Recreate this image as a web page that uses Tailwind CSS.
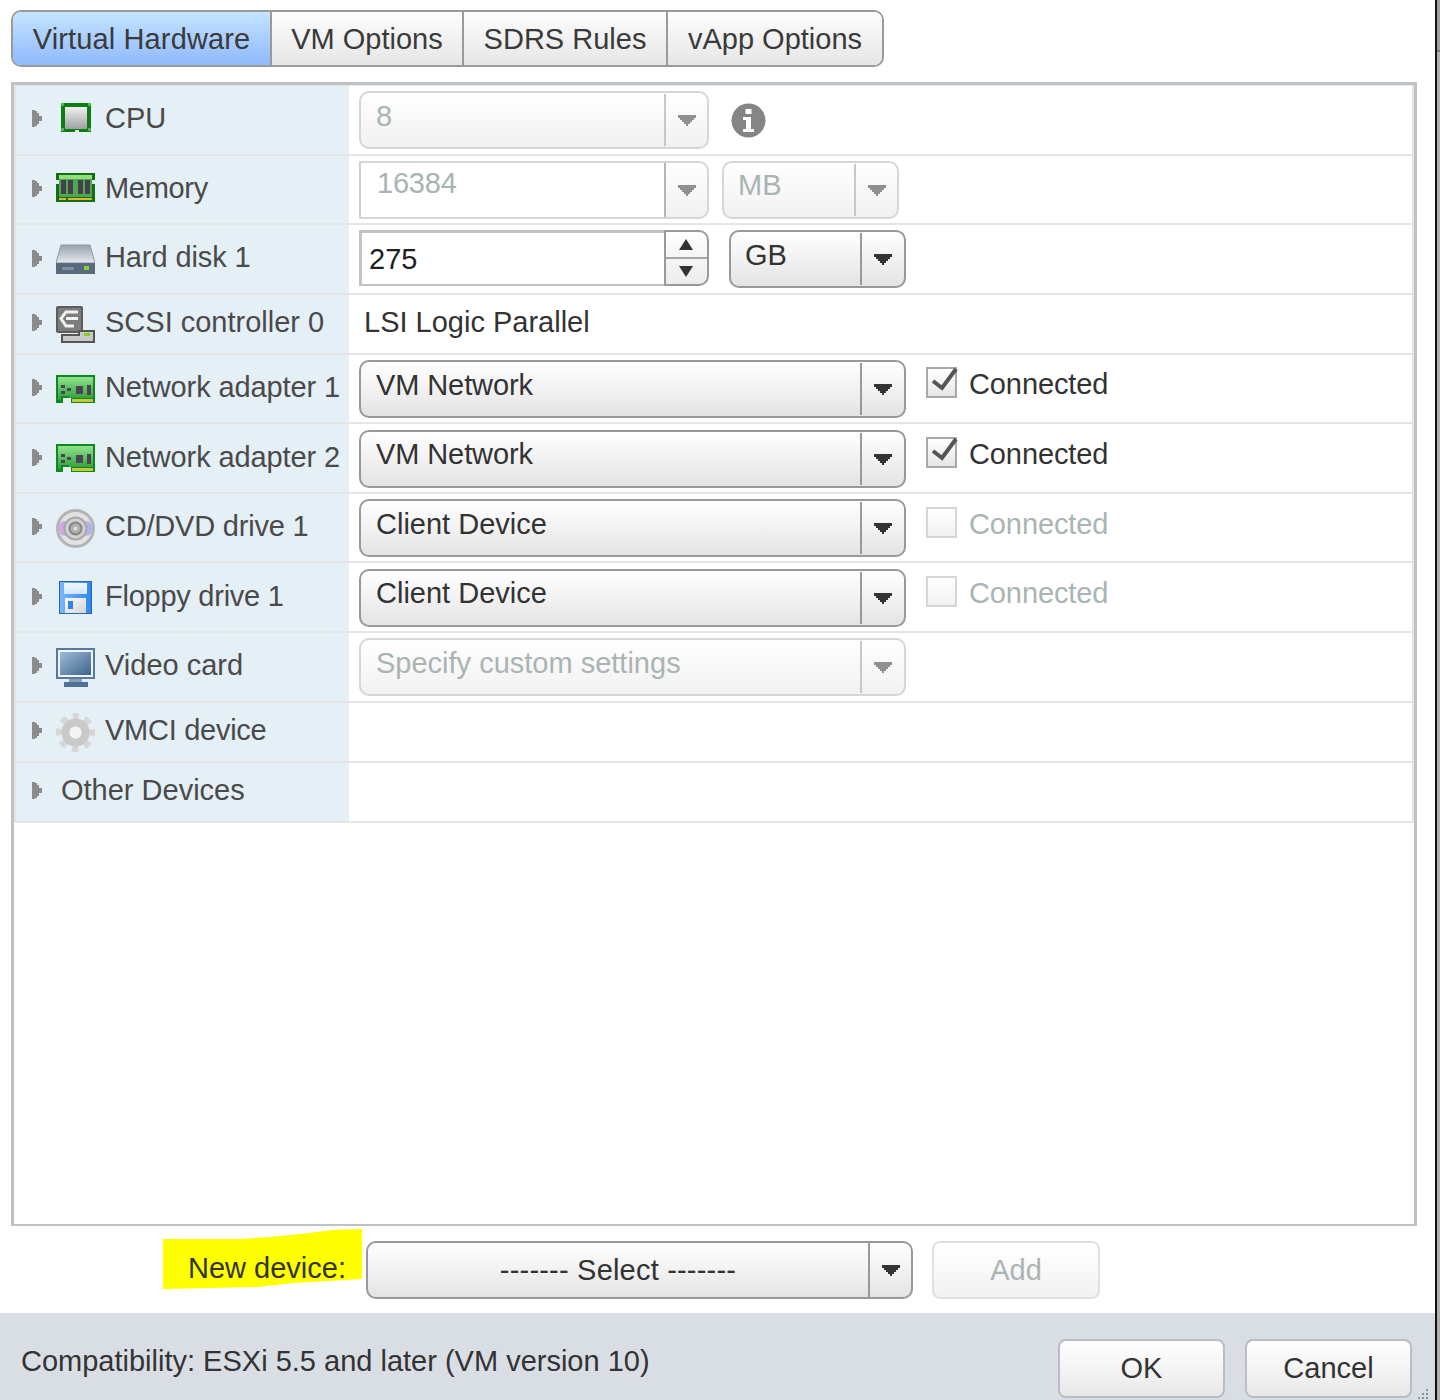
<!DOCTYPE html>
<html lang="en">
<head>
  <meta charset="UTF-8">
  <title>Virtual Hardware</title>
  <script src="https://cdn.jsdelivr.net/npm/@tailwindcss/browser@4"></script>
</head>
<body class="bg-white font-['Liberation_Sans',Arial,sans-serif] text-[29px] leading-none text-[#333]">
  <svg class="absolute h-0 w-0" width="0" height="0">
    <defs>
      <symbol id="expand" viewBox="0 0 10 17"><path d="M0 0h3v1h2v2h2v3h3v5H7v3H5v2H3v1H0z" fill="#8b8b8b"/></symbol>
      <symbol id="caret" viewBox="0 0 18 11"><path d="M0 0h18v3h-2v2h-2v2h-2v2h-2v2H8V9H6V7H4V5H2V3H0z" fill="currentColor"/></symbol>
      <linearGradient id="netGreen" x1="0" y1="0" x2="0" y2="1"><stop offset="0" stop-color="#8fe48c"/><stop offset="1" stop-color="#2f9a3c"/></linearGradient>
      <symbol id="nic" viewBox="0 0 39 28">
        <path d="M0 0h39v28H15v-5H7v5H0z" fill="#0d8a1e"/>
        <path d="M2 2h35v21H13v-2H5v4H2z" fill="url(#netGreen)"/>
        <path d="M16 24h21v3H16z" fill="#c6c838"/>
        <path d="M5 10h4v3H5zM5 16h4v3H5zM11 13h4v3h-4zM20 11h7v8h-7zM31 10h4v10h-4z" fill="#4a4650"/>
      </symbol>
    </defs>
  </svg>

  <div class="flex h-[1400px] w-[1440px]">
    <div class="relative flex w-[1435px] flex-col">

      <!-- Tabs -->
      <div class="pl-[11px] pt-[10px]">
        <div class="flex h-[57px] w-[873px] overflow-hidden rounded-[10px] border-2 border-[#9a9a9a] text-[#3a3a3a]">
          <div class="flex w-[259px] items-center justify-center border-r-2 border-[#9a9a9a] bg-gradient-to-b from-[#c4e4ff] to-[#90b9fb] pt-[2px] tracking-[0.13px]">Virtual Hardware</div>
          <div class="flex w-[192px] items-center justify-center border-r-2 border-[#9a9a9a] bg-gradient-to-b from-[#fdfdfd] to-[#e6e6e6] pt-[2px]">VM Options</div>
          <div class="flex w-[204px] items-center justify-center border-r-2 border-[#9a9a9a] bg-gradient-to-b from-[#fdfdfd] to-[#e6e6e6] pt-[2px]">SDRS Rules</div>
          <div class="flex flex-1 items-center justify-center bg-gradient-to-b from-[#fdfdfd] to-[#e6e6e6] pt-[2px]">vApp Options</div>
        </div>
      </div>

      <!-- Device list -->
      <div class="ml-[11px] mt-[15px] h-[1144px] w-[1406px] border-[3px] border-b-2 border-[#bcc2c6]">
        <div class="border-x-2 border-t border-[#e5e5e5]">

          <!-- CPU -->
          <div class="flex h-[70px] border-b-2 border-[#e5e5e5]">
            <div class="flex w-[333px] items-center bg-[#e4eff6] pb-[3px] pl-[16px] text-[#4a4a4a]">
              <svg class="mr-[14px] h-[17px] w-[10px]"><use href="#expand"/></svg>
              <div class="mr-[10px] flex w-[39px] justify-center pb-[2px]">
                <svg width="30" height="30" viewBox="0 0 30 30">
                  <defs><linearGradient id="cpuFace" x1="0" y1="0" x2="0" y2="1"><stop offset="0" stop-color="#f0f0f0"/><stop offset="1" stop-color="#a0a0a0"/></linearGradient></defs>
                  <path d="M0 0h30v29H18v-2h-4v2H0z" fill="#0b7d12"/>
                  <path d="M0 0h3v3H0zM27 0h3v3h-3zM0 25h3v3H0zM27 25h3v3h-3z" fill="#52b54f"/>
                  <rect x="4" y="4" width="22" height="22" fill="url(#cpuFace)"/>
                </svg>
              </div>
              <span>CPU</span>
            </div>
            <div class="flex flex-1 items-start pl-[10px] pt-[5px]">
              <div class="flex h-[58px] w-[350px] rounded-[10px] border-2 border-[#d6d6d6] bg-gradient-to-b from-white to-[#f1f1f1] text-[#a9b4b4]">
                <div class="flex flex-1 items-center pb-[8px] pl-[15px]">8</div>
                <div class="my-[1px] flex w-[43px] items-center justify-center border-l-2 border-[#c8c8c8] text-[#8f8f8f]"><svg class="h-[11px] w-[18px]"><use href="#caret"/></svg></div>
              </div>
              <svg class="ml-[22px] mt-[12px]" width="35" height="35" viewBox="0 0 35 35">
                <circle cx="17.5" cy="17.5" r="17" fill="#858585"/>
                <rect x="14.5" y="6" width="6" height="5" fill="#fff"/>
                <path d="M12 14h8v12h3v3H12v-3h3v-9h-3z" fill="#fff"/>
              </svg>
            </div>
          </div>

          <!-- Memory -->
          <div class="flex h-[69px] border-b-2 border-[#e5e5e5]">
            <div class="flex w-[333px] items-center bg-[#e4eff6] pb-[3px] pl-[16px] text-[#4a4a4a]">
              <svg class="mr-[14px] h-[17px] w-[10px]"><use href="#expand"/></svg>
              <div class="mr-[10px] flex w-[39px] justify-center pb-[2px]">
                <svg width="39" height="29" viewBox="0 0 39 29">
                  <rect width="39" height="29" fill="#136f16"/>
                  <rect x="3" y="2" width="33" height="4" fill="#92e07c"/>
                  <rect x="3" y="6" width="33" height="18" fill="#4ea852"/>
                  <path d="M0 7h3v4H0zM36 7h3v4h-3z" fill="#dfeaf0"/>
                  <path d="M5 7h5v14H5zM12 7h5v14h-5zM22 7h5v14h-5zM29 7h5v14h-5z" fill="#45414a"/>
                  <path d="M3 25h7v2H3zM12 25h24v2H12z" fill="#e6b52e"/>
                </svg>
              </div>
              <span class="tracking-[-0.3px]">Memory</span>
            </div>
            <div class="flex flex-1 items-start pl-[10px] pt-[5px]">
              <div class="flex h-[58px] w-[350px] overflow-hidden rounded-r-[10px] border-2 border-l-0 border-[#d6d6d6] bg-gradient-to-b from-white to-[#f1f1f1]">
                <div class="flex w-[307px] items-center border-2 border-y-0 border-l-[#d0d0d0] border-r-[#b5b5b5] bg-white pb-[14px] pl-[16px] text-[#a9b4b4] tracking-[-0.2px]">16384</div>
                <div class="flex flex-1 items-center justify-center text-[#8f8f8f]"><svg class="h-[11px] w-[18px]"><use href="#caret"/></svg></div>
              </div>
              <div class="ml-[13px] flex h-[58px] w-[177px] rounded-[10px] border-2 border-[#d6d6d6] bg-gradient-to-b from-white to-[#f1f1f1] text-[#a9b4b4]">
                <div class="flex flex-1 items-center pb-[10px] pl-[14px]">MB</div>
                <div class="my-[1px] flex w-[43px] items-center justify-center border-l-2 border-[#c8c8c8] text-[#8f8f8f]"><svg class="h-[11px] w-[18px]"><use href="#caret"/></svg></div>
              </div>
            </div>
          </div>

          <!-- Hard disk -->
          <div class="flex h-[70px] border-b-2 border-[#e5e5e5]">
            <div class="flex w-[333px] items-center bg-[#e4eff6] pb-[4px] pl-[16px] text-[#4a4a4a]">
              <svg class="mr-[14px] mt-[2px] h-[17px] w-[10px]"><use href="#expand"/></svg>
              <div class="mr-[10px] flex w-[39px] justify-center pt-[3px]">
                <svg width="39" height="30" viewBox="0 0 39 30">
                  <defs><linearGradient id="diskTop" x1="0" y1="0" x2="0" y2="1"><stop offset="0" stop-color="#98a2ae"/><stop offset="1" stop-color="#e6e9ed"/></linearGradient></defs>
                  <path d="M5 1h29l5 18H0z" fill="url(#diskTop)" stroke="#8d97a3"/>
                  <rect y="19" width="39" height="11" fill="#596a7d"/>
                  <rect x="6" y="23" width="12" height="3" fill="#7f8d9c"/>
                  <rect x="28" y="22" width="5" height="4" fill="#86d13a"/>
                </svg>
              </div>
              <span class="tracking-[-0.1px]">Hard disk 1</span>
            </div>
            <div class="flex flex-1 items-start pl-[10px] pt-[5px]">
              <div class="flex h-[56px] w-[305px] items-center border-[3px] border-b-2 border-r-0 border-[#bfc4c6] bg-white pl-[7px] pt-[2px] text-[#1f1f1f]">275</div>
              <div class="flex h-[56px] w-[45px] flex-col rounded-r-[10px] border-2 border-[#9a9a9a] bg-gradient-to-b from-white to-[#ececec] text-[#333]">
                <div class="flex flex-1 items-center justify-center border-b-2 border-[#a5a5a5] pr-[2px]"><svg width="14" height="11" viewBox="0 0 14 11"><path d="M7 0l7 11H0z" fill="currentColor"/></svg></div>
                <div class="flex flex-1 items-center justify-center pr-[2px]"><svg width="14" height="11" viewBox="0 0 14 11"><path d="M0 0h14L7 11z" fill="currentColor"/></svg></div>
              </div>
              <div class="ml-[20px] flex h-[58px] w-[177px] rounded-[10px] border-2 border-[#999] bg-gradient-to-b from-white to-[#e4e4e4]">
                <div class="flex flex-1 items-center pb-[8px] pl-[14px]">GB</div>
                <div class="my-[1px] flex w-[44px] items-center justify-center border-l-2 border-[#999]"><svg class="h-[11px] w-[18px]"><use href="#caret"/></svg></div>
              </div>
            </div>
          </div>

          <!-- SCSI -->
          <div class="flex h-[60px] border-b-2 border-[#e5e5e5]">
            <div class="flex w-[333px] items-center bg-[#e4eff6] pb-[4px] pl-[16px] text-[#4a4a4a]">
              <svg class="mr-[14px] h-[17px] w-[10px]"><use href="#expand"/></svg>
              <div class="mr-[10px] flex w-[39px] justify-center pt-[5px]">
                <svg width="39" height="37" viewBox="0 0 39 37">
                  <rect width="27" height="27" rx="2" fill="#5c5c5c"/>
                  <rect x="2" y="2" width="23" height="23" fill="#7d7d7d"/>
                  <path d="M22 6H10L5 12.5 10 20H18M22 12.5H10" fill="none" stroke="#f1f1f1" stroke-width="3"/>
                  <path d="M22 24h17v13H5V28h17z" fill="#555"/>
                  <path d="M24 26h13v9H7v-5h17z" fill="#c9c9c9"/>
                  <rect x="28" y="27" width="6" height="3" fill="#7ed321"/>
                </svg>
              </div>
              <span>SCSI controller 0</span>
            </div>
            <div class="flex flex-1 items-center pb-[3px] pl-[15px]">LSI Logic Parallel</div>
          </div>

          <!-- Network adapter 1 -->
          <div class="flex h-[69px] border-b-2 border-[#e5e5e5]">
            <div class="flex w-[333px] items-center bg-[#e4eff6] pl-[16px] text-[#4a4a4a]">
              <svg class="mb-[2px] mr-[14px] h-[17px] w-[10px]"><use href="#expand"/></svg>
              <div class="mr-[10px] flex w-[39px] justify-center"><svg class="h-[28px] w-[39px]"><use href="#nic"/></svg></div>
              <span class="pb-[2px] tracking-[-0.12px]">Network adapter 1</span>
            </div>
            <div class="flex flex-1 items-start pl-[10px] pt-[5px]">
              <div class="flex h-[58px] w-[547px] rounded-[10px] border-2 border-[#999] bg-gradient-to-b from-white to-[#e4e4e4]">
                <div class="flex flex-1 items-center pb-[8px] pl-[15px] tracking-[-0.1px]">VM Network</div>
                <div class="my-[1px] flex w-[44px] items-center justify-center border-l-2 border-[#999]"><svg class="h-[11px] w-[18px]"><use href="#caret"/></svg></div>
              </div>
              <div class="ml-[20px] mt-[7px] flex h-[31px] items-center gap-[12px]">
                <div class="relative h-[31px] w-[31px] border-2 border-[#a8a8a8] bg-gradient-to-b from-white to-[#e6e6e6]">
                  <svg class="absolute left-[-2px] top-[-2px]" width="33" height="31" viewBox="0 0 33 31"><path d="M7 14l9 7L30 2" fill="none" stroke="#555" stroke-width="4"/></svg>
                </div>
                <span class="pt-[4px] tracking-[-0.1px]">Connected</span>
              </div>
            </div>
          </div>

          <!-- Network adapter 2 -->
          <div class="flex h-[70px] border-b-2 border-[#e5e5e5]">
            <div class="flex w-[333px] items-center bg-[#e4eff6] pl-[16px] text-[#4a4a4a]">
              <svg class="mb-[2px] mr-[14px] h-[17px] w-[10px]"><use href="#expand"/></svg>
              <div class="mr-[10px] flex w-[39px] justify-center"><svg class="h-[28px] w-[39px]"><use href="#nic"/></svg></div>
              <span class="pb-[2px] tracking-[-0.12px]">Network adapter 2</span>
            </div>
            <div class="flex flex-1 items-start pl-[10px] pt-[6px]">
              <div class="flex h-[58px] w-[547px] rounded-[10px] border-2 border-[#999] bg-gradient-to-b from-white to-[#e4e4e4]">
                <div class="flex flex-1 items-center pb-[9px] pl-[15px] tracking-[-0.1px]">VM Network</div>
                <div class="my-[1px] flex w-[44px] items-center justify-center border-l-2 border-[#999]"><svg class="h-[11px] w-[18px]"><use href="#caret"/></svg></div>
              </div>
              <div class="ml-[20px] mt-[7px] flex h-[31px] items-center gap-[12px]">
                <div class="relative h-[31px] w-[31px] border-2 border-[#a8a8a8] bg-gradient-to-b from-white to-[#e6e6e6]">
                  <svg class="absolute left-[-2px] top-[-2px]" width="33" height="31" viewBox="0 0 33 31"><path d="M7 14l9 7L30 2" fill="none" stroke="#555" stroke-width="4"/></svg>
                </div>
                <span class="pt-[4px] tracking-[-0.1px]">Connected</span>
              </div>
            </div>
          </div>

          <!-- CD/DVD -->
          <div class="flex h-[69px] border-b-2 border-[#e5e5e5]">
            <div class="flex w-[333px] items-center bg-[#e4eff6] pl-[16px] text-[#4a4a4a]">
              <svg class="mb-[2px] mr-[14px] h-[17px] w-[10px]"><use href="#expand"/></svg>
              <div class="mr-[10px] flex w-[39px] justify-center pt-[2px]">
                <svg width="39" height="39" viewBox="0 0 39 39">
                  <defs><linearGradient id="cdShine" x1="0" y1="0" x2="1" y2="0"><stop offset="0" stop-color="#e8a0d8"/><stop offset=".18" stop-color="#adb2ee"/><stop offset=".35" stop-color="#d8d8d8"/><stop offset=".7" stop-color="#d8d8d8"/><stop offset=".86" stop-color="#d0a8ea"/><stop offset="1" stop-color="#86c0f0"/></linearGradient></defs>
                  <circle cx="19.5" cy="19.5" r="18" fill="#e2e2e2" stroke="#b4b4b4" stroke-width="3"/>
                  <rect x="3" y="12" width="33" height="15" rx="6" fill="url(#cdShine)"/>
                  <circle cx="19.5" cy="19.5" r="11" fill="#d0d0d0" stroke="#a8a8a8" stroke-width="2"/>
                  <circle cx="19.5" cy="19.5" r="6" fill="#b0b0b0" stroke="#858585" stroke-width="2"/>
                  <circle cx="19.5" cy="19.5" r="2" fill="#dcdcdc"/>
                </svg>
              </div>
              <span class="pb-[2px] tracking-[-0.2px]">CD/DVD drive 1</span>
            </div>
            <div class="flex flex-1 items-start pl-[10px] pt-[5px]">
              <div class="flex h-[58px] w-[547px] rounded-[10px] border-2 border-[#999] bg-gradient-to-b from-white to-[#e4e4e4]">
                <div class="flex flex-1 items-center pb-[8px] pl-[15px]">Client Device</div>
                <div class="my-[1px] flex w-[44px] items-center justify-center border-l-2 border-[#999]"><svg class="h-[11px] w-[18px]"><use href="#caret"/></svg></div>
              </div>
              <div class="ml-[20px] mt-[8px] flex h-[31px] items-center gap-[12px] text-[#a9b4b4]">
                <div class="h-[31px] w-[31px] border-2 border-[#d6d6d6] bg-gradient-to-b from-white to-[#f1f1f1]"></div>
                <span class="pt-[4px] tracking-[-0.1px]">Connected</span>
              </div>
            </div>
          </div>

          <!-- Floppy -->
          <div class="flex h-[70px] border-b-2 border-[#e5e5e5]">
            <div class="flex w-[333px] items-center bg-[#e4eff6] pb-[2px] pl-[16px] text-[#4a4a4a]">
              <svg class="mr-[14px] h-[17px] w-[10px]"><use href="#expand"/></svg>
              <div class="mr-[10px] flex w-[39px] justify-center pt-[2px]">
                <svg width="33" height="33" viewBox="0 0 33 33">
                  <defs>
                    <linearGradient id="floppyBody" x1="0" y1="0" x2="1" y2="0"><stop offset="0" stop-color="#7ab8f5"/><stop offset="1" stop-color="#2f86ea"/></linearGradient>
                    <linearGradient id="floppyLabel" x1="0" y1="0" x2="0" y2="1"><stop offset="0" stop-color="#f2f8fe"/><stop offset="1" stop-color="#cfe4fa"/></linearGradient>
                    <linearGradient id="floppyShutter" x1="0" y1="0" x2="1" y2="1"><stop offset="0" stop-color="#fafafa"/><stop offset="1" stop-color="#d5d5d5"/></linearGradient>
                  </defs>
                  <rect width="33" height="33" fill="#2468bd"/>
                  <rect x="1" y="1" width="31" height="31" fill="url(#floppyBody)"/>
                  <rect x="5" y="2" width="23" height="11" fill="url(#floppyLabel)"/>
                  <rect x="6" y="17" width="21" height="15" fill="url(#floppyShutter)"/>
                  <rect x="9" y="20" width="5" height="8" fill="#2f86ea"/>
                </svg>
              </div>
              <span class="tracking-[-0.25px]">Floppy drive 1</span>
            </div>
            <div class="flex flex-1 items-start pl-[10px] pt-[6px]">
              <div class="flex h-[58px] w-[547px] rounded-[10px] border-2 border-[#999] bg-gradient-to-b from-white to-[#e4e4e4]">
                <div class="flex flex-1 items-center pb-[10px] pl-[15px]">Client Device</div>
                <div class="my-[1px] flex w-[44px] items-center justify-center border-l-2 border-[#999]"><svg class="h-[11px] w-[18px]"><use href="#caret"/></svg></div>
              </div>
              <div class="ml-[20px] mt-[7px] flex h-[31px] items-center gap-[12px] text-[#a9b4b4]">
                <div class="h-[31px] w-[31px] border-2 border-[#d6d6d6] bg-gradient-to-b from-white to-[#f1f1f1]"></div>
                <span class="pt-[4px] tracking-[-0.1px]">Connected</span>
              </div>
            </div>
          </div>

          <!-- Video card -->
          <div class="flex h-[70px] border-b-2 border-[#e5e5e5]">
            <div class="flex w-[333px] items-center bg-[#e4eff6] pb-[3px] pl-[16px] text-[#4a4a4a]">
              <svg class="mr-[14px] h-[17px] w-[10px]"><use href="#expand"/></svg>
              <div class="mr-[10px] flex w-[39px] justify-center pt-[4px]">
                <svg width="39" height="39" viewBox="0 0 39 39">
                  <defs><linearGradient id="screen" x1="0" y1="0" x2="1" y2="1"><stop offset="0" stop-color="#9dbcd8"/><stop offset="1" stop-color="#3f6288"/></linearGradient></defs>
                  <rect width="39" height="31" fill="#557a9e"/>
                  <rect x="2" y="2" width="35" height="27" fill="#eef3f8"/>
                  <rect x="4" y="4" width="31" height="23" fill="url(#screen)"/>
                  <rect x="13" y="31" width="13" height="3" fill="#8aa0b6"/>
                  <rect x="8" y="34" width="24" height="5" fill="#4f7296"/>
                </svg>
              </div>
              <span>Video card</span>
            </div>
            <div class="flex flex-1 items-start pl-[10px] pt-[5px]">
              <div class="flex h-[58px] w-[547px] rounded-[10px] border-2 border-[#d6d6d6] bg-gradient-to-b from-white to-[#f1f1f1] text-[#a9b4b4]">
                <div class="flex flex-1 items-center pb-[8px] pl-[15px]">Specify custom settings</div>
                <div class="my-[1px] flex w-[44px] items-center justify-center border-l-2 border-[#c8c8c8] text-[#8f8f8f]"><svg class="h-[11px] w-[18px]"><use href="#caret"/></svg></div>
              </div>
            </div>
          </div>

          <!-- VMCI -->
          <div class="flex h-[60px] border-b-2 border-[#e5e5e5]">
            <div class="flex w-[333px] items-center bg-[#e4eff6] pb-[3px] pl-[16px] text-[#4a4a4a]">
              <svg class="mr-[14px] h-[17px] w-[10px]"><use href="#expand"/></svg>
              <div class="mr-[10px] flex w-[39px] justify-center pt-[4px]">
                <svg width="39" height="39" viewBox="0 0 39 39">
                  <circle cx="19.5" cy="19.5" r="16" fill="none" stroke="#d6d6d6" stroke-width="7" stroke-dasharray="6.5 6.07" stroke-dashoffset="3.25" transform="rotate(-90 19.5 19.5)"/>
                  <circle cx="19.5" cy="19.5" r="10" fill="none" stroke="#c9c9c9" stroke-width="8"/>
                  <circle cx="19.5" cy="19.5" r="6" fill="#f2f4f5"/>
                </svg>
              </div>
              <span class="tracking-[-0.27px]">VMCI device</span>
            </div>
            <div class="flex-1"></div>
          </div>

          <!-- Other devices -->
          <div class="flex h-[60px] border-b-2 border-[#e5e5e5]">
            <div class="flex w-[333px] items-center bg-[#e4eff6] pb-[3px] pl-[16px] text-[#4a4a4a]">
              <svg class="mr-[19px] h-[17px] w-[10px]"><use href="#expand"/></svg>
              <span>Other Devices</span>
            </div>
            <div class="flex-1"></div>
          </div>
        </div>
      </div>

      <!-- New device -->
      <div class="flex h-[87px] items-start pt-[15px]">
        <div class="relative ml-[163px] flex h-[58px] w-[203px] items-center pb-[3px] pl-[25px] text-[#333]">
          <svg class="absolute left-0 top-[-12px]" width="199" height="60" viewBox="0 0 199 60"><path d="M0 10H77L107 8 137 5 170 1 199 0V50L165 52 130 54 95 58 0 60z" fill="#ffff00"/></svg>
          <span class="relative">New device:</span>
        </div>
        <div class="flex h-[58px] w-[547px] rounded-[10px] border-2 border-[#999] bg-gradient-to-b from-white to-[#e4e4e4]">
          <div class="flex flex-1 items-center justify-center tracking-[0.2px]">------- Select -------</div>
          <div class="flex w-[43px] items-center justify-center border-l-2 border-[#999]"><svg class="h-[11px] w-[18px]"><use href="#caret"/></svg></div>
        </div>
        <div class="ml-[19px] flex h-[58px] w-[168px] items-center justify-center rounded-[8px] border-2 border-[#e0e0e0] bg-gradient-to-b from-white to-[#f2f2f2] text-[#a9b4b4]">Add</div>
      </div>

      <!-- Footer -->
      <div class="flex flex-1 items-start justify-between bg-[#d9dee5] pl-[21px] pr-[23px]">
        <div class="pt-[34px]">Compatibility: ESXi 5.5 and later (VM version 10)</div>
        <div class="flex gap-[20px] pt-[26px]">
          <div class="flex h-[59px] w-[167px] items-center justify-center rounded-[8px] border-2 border-[#b8bec4] bg-gradient-to-b from-white to-[#e8e8e8]">OK</div>
          <div class="flex h-[59px] w-[167px] items-center justify-center rounded-[8px] border-2 border-[#b8bec4] bg-gradient-to-b from-white to-[#e8e8e8]">Cancel</div>
        </div>
      </div>
      <svg class="absolute bottom-0 right-[6px]" width="12" height="12" viewBox="0 0 12 12"><path d="M9 1h2v2H9zM9 5h2v2H9zM5 5h2v2H5zM9 9h2v2H9zM5 9h2v2H5zM1 9h2v2H1z" fill="#8a9098"/></svg>
    </div>

    <!-- Window edge -->
    <div class="flex w-[5px] border-l-2 border-[#111]">
      <div class="flex flex-1 flex-col bg-[#b0b0b0]">
        <div class="h-[52px] border-b-2 border-[#7c7c7c] bg-[#a0a0a0]"></div>
      </div>
    </div>
  </div>
</body>
</html>
